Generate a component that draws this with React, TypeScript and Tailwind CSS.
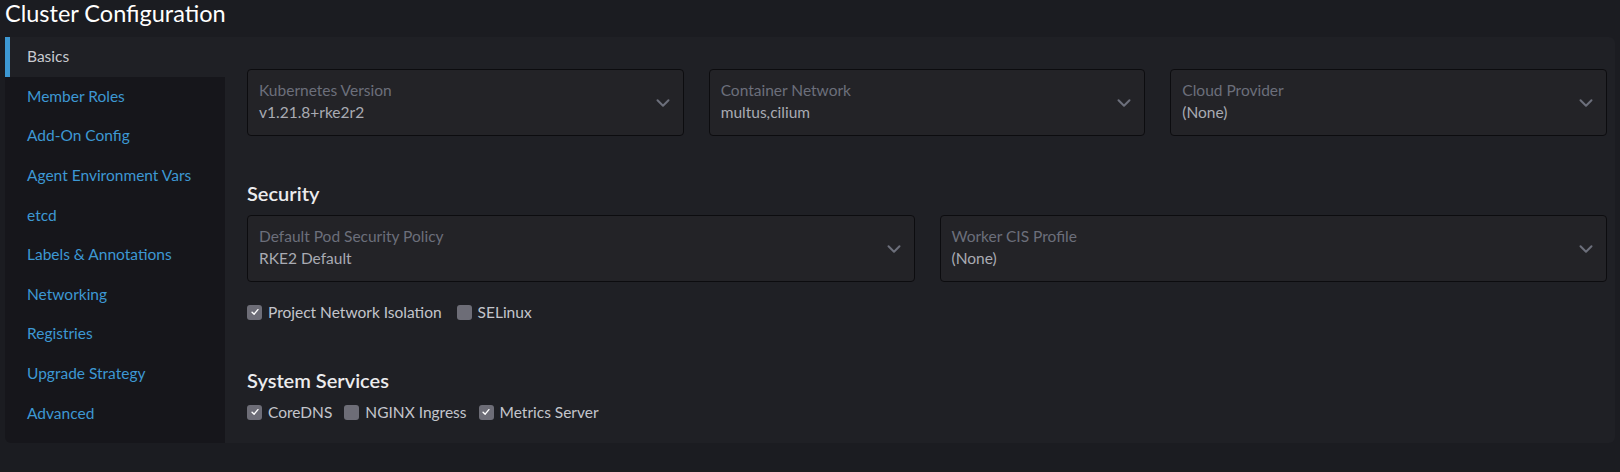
import { ChevronDown } from "lucide-react";

const navItems = [
  "Basics",
  "Member Roles",
  "Add-On Config",
  "Agent Environment Vars",
  "etcd",
  "Labels & Annotations",
  "Networking",
  "Registries",
  "Upgrade Strategy",
  "Advanced",
];

const Select = ({ label, value }: { label: string; value: string }) => (
  <div className="h-[67px] rounded-[4px] border border-[#0c0c0f] bg-[#232327] flex items-center pl-[11px] pr-[9px]">
    <div className="flex-1 flex flex-col -mt-[3px]">
      <span className="text-[15.5px] leading-[20px] text-[#6c6f7b]">{label}</span>
      <span className="text-[15.5px] leading-[20px] text-[#a9abb3] mt-[2px]">{value}</span>
    </div>
    <ChevronDown className="w-[22px] h-[22px] text-[#6c6f7b]" strokeWidth={2.2} />
  </div>
);

const Check = ({ label, checked }: { label: string; checked?: boolean }) => (
  <label className="flex items-center gap-[6px] text-[15.5px] leading-[20px] text-[#c3c5cc]">
    <span className="w-[15px] h-[15px] rounded-[3px] bg-[#6d6d77] flex items-center justify-center">
      {checked && (
        <svg viewBox="0 0 12 12" className="w-[10px] h-[10px]">
          <path d="M2.5 6.3 L5 8.6 L9.5 3.2" fill="none" stroke="#ffffff" strokeWidth="1.7" strokeLinecap="round" strokeLinejoin="round" />
        </svg>
      )}
    </span>
    {label}
  </label>
);

export default function App() {
  return (
    <div
      className="w-full h-[472px] bg-[#1b1c21] overflow-hidden"
      style={{ fontFamily: "Lato, 'Noto Sans', sans-serif" }}
    >
      <h1 className="h-[37px] pl-[5px] text-[23.5px] leading-[26px] text-white">Cluster Configuration</h1>

      <div className="mx-[5px] h-[406px] flex rounded-md bg-[#1f2025]">
        {/* Side nav */}
        <nav className="w-[220px] bg-[#16161b] rounded-bl-md flex flex-col">
          {navItems.map((item, i) =>
            i === 0 ? (
              <div
                key={item}
                className="h-[39.6px] flex items-center bg-[#1f2025] border-l-[5px] border-[#3d98d3] pl-[17px] text-[15.5px] text-[#c8cad0]"
              >
                {item}
              </div>
            ) : (
              <div key={item} className="h-[39.6px] flex items-center pl-[22px] text-[15.5px] text-[#3d98d3]">
                {item}
              </div>
            )
          )}
        </nav>

        {/* Main */}
        <div className="flex-1 pl-[22px] pr-[8px] pt-[32px]">
          <div className="grid grid-cols-3 gap-[25px]">
            <Select label="Kubernetes Version" value="v1.21.8+rke2r2" />
            <Select label="Container Network" value="multus,cilium" />
            <Select label="Cloud Provider" value="(None)" />
          </div>

          <h2 className="mt-[45px] text-[20px] leading-[24px] font-semibold text-[#ececee]">Security</h2>
          <div className="mt-[10px] grid grid-cols-2 gap-[25px]">
            <Select label="Default Pod Security Policy" value="RKE2 Default" />
            <Select label="Worker CIS Profile" value="(None)" />
          </div>
          <div className="mt-[20px] flex items-center gap-[15px]">
            <Check label="Project Network Isolation" checked />
            <Check label="SELinux" />
          </div>

          <h2 className="mt-[46px] text-[20px] leading-[24px] font-semibold text-[#ececee]">System Services</h2>
          <div className="mt-[10px] flex items-center gap-[12px]">
            <Check label="CoreDNS" checked />
            <Check label="NGINX Ingress" />
            <Check label="Metrics Server" checked />
          </div>
        </div>
      </div>
    </div>
  );
}
